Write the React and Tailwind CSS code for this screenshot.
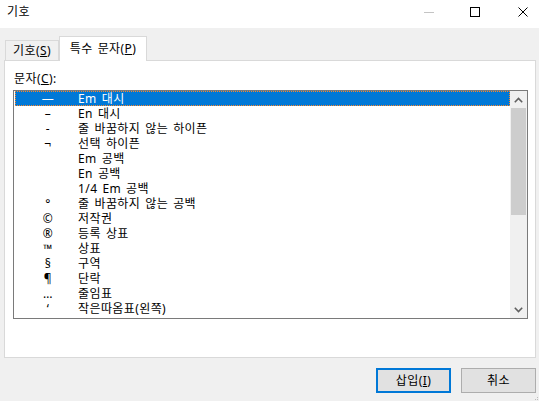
import React from "react";

const items = [
  ["—", "Em 대시"],
  ["–", "En 대시"],
  ["-", "줄 바꿈하지 않는 하이픈"],
  ["¬", "선택 하이픈"],
  ["", "Em 공백"],
  ["", "En 공백"],
  ["", "1/4 Em 공백"],
  ["°", "줄 바꿈하지 않는 공백"],
  ["©", "저작권"],
  ["®", "등록 상표"],
  ["™", "상표"],
  ["§", "구역"],
  ["¶", "단락"],
  ["…", "줄임표"],
  ["‘", "작은따옴표(왼쪽)"],
];

export default function App() {
  return (
    <div
      className="w-[539px] h-[401px] bg-[#f0f0f0] text-[12px] text-black overflow-hidden relative tracking-[0.4px] [word-spacing:1.5px]"
      style={{ fontFamily: '"Noto Sans", "Noto Sans CJK KR", sans-serif' }}
    >
      {/* title bar */}
      <div className="h-[28px] bg-white flex items-center pb-[4px]">
        <span className="pl-[7px] leading-[16px]">기호</span>
        <svg className="ml-auto mr-[36px]" width="10" height="10" viewBox="0 0 10 10">
          <line x1="0" y1="5.5" x2="10" y2="5.5" stroke="#c4c4c4" strokeWidth="1" />
        </svg>
        <svg className="mr-[38px]" width="10" height="10" viewBox="0 0 10 10">
          <rect x="0.5" y="0.5" width="9" height="9" fill="none" stroke="#000" strokeWidth="1" />
        </svg>
        <svg className="mr-[11px]" width="10" height="10" viewBox="0 0 10 10">
          <path d="M0.5 0.5 L9.5 9.5 M9.5 0.5 L0.5 9.5" stroke="#000" strokeWidth="1" />
        </svg>
      </div>

      {/* tabs */}
      <div className="flex items-end pl-[5px] pt-[8px] h-[33px] relative z-10">
        <div className="w-[54px] h-[20px] mb-[1px] border border-b-0 border-[#d9d9d9] flex items-center justify-center leading-[15px]">
          기호(<u>S</u>)
        </div>
        <div className="w-[88px] h-[25px] bg-white border border-b-0 border-[#d9d9d9] flex items-center justify-center leading-[15px] pb-[1px]">
          특수 문자(<u>P</u>)
        </div>
      </div>

      {/* panel */}
      <div className="ml-[4px] w-[532px] h-[298px] -mt-[1px] bg-white border border-[#d9d9d9] flex flex-col">
        <div className="pl-[9px] pt-[10px] leading-[15px]">
          문자(<u>C</u>):
        </div>
        <div className="ml-[8px] mt-[4px] w-[515px] h-[229px] border border-[#7a7a7a] flex">
          <div className="flex-1 flex flex-col pl-[1px]">
            {items.map(([sym, name], i) => (
              <div
                key={i}
                className={
                  "h-[15px] flex items-center leading-[15px] " +
                  (i === 0
                    ? "bg-[#0078d7] text-white border border-dotted border-[#ff8728]"
                    : "")
                }
              >
                <span className={"w-[32px] text-center " + (i === 0 ? "ml-[16px]" : "ml-[17px]")}>
                  {sym}
                </span>
                <span className="ml-[14px] whitespace-nowrap">{name}</span>
              </div>
            ))}
          </div>
          {/* scrollbar */}
          <div className="w-[17px] bg-[#f0f0f0] flex flex-col">
            <div className="h-[17px] flex items-center justify-center">
              <svg width="9" height="6" viewBox="0 0 9 6">
                <path d="M0.8 5.2 L4.5 1.5 L8.2 5.2" fill="none" stroke="#606060" strokeWidth="1.6" />
              </svg>
            </div>
            <div className="h-[107px] mx-[1px] bg-[#cdcdcd]" />
            <div className="flex-1" />
            <div className="h-[17px] flex items-center justify-center">
              <svg width="9" height="6" viewBox="0 0 9 6">
                <path d="M0.8 0.8 L4.5 4.5 L8.2 0.8" fill="none" stroke="#606060" strokeWidth="1.6" />
              </svg>
            </div>
          </div>
        </div>
      </div>

      {/* buttons */}
      <div className="flex justify-end gap-[10px] pr-[3px] mt-[10px]">
        <div className="w-[75px] h-[25px] bg-[#e1e1e1] border-2 border-[#0078d7] flex items-center justify-center leading-[15px]">
          삽입(<u>I</u>)
        </div>
        <div className="w-[75px] h-[25px] bg-[#e1e1e1] border border-[#adadad] flex items-center justify-center leading-[15px]">
          취소
        </div>
      </div>

      {/* size grip */}
      <svg className="absolute right-0 bottom-0" width="4" height="4" viewBox="0 0 4 4">
        <rect x="2" y="0" width="1" height="1" fill="#bcbcbc" />
        <rect x="0" y="2" width="1" height="1" fill="#bcbcbc" />
        <rect x="2" y="2" width="1" height="1" fill="#bcbcbc" />
      </svg>
    </div>
  );
}
